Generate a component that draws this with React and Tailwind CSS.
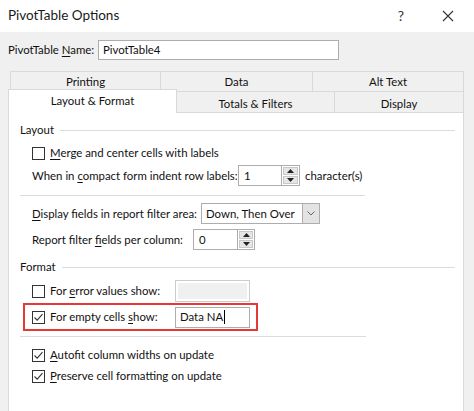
import React from 'react'

const inputBorder = 'border border-[#adadad]'

function Acc({ children }) {
  return <span className="underline underline-offset-[2px] decoration-[1px]">{children}</span>
}

function Check({ checked }) {
  return (
    <span className="flex h-[13px] w-[13px] shrink-0 items-center justify-center border border-[#333333] bg-white">
      {checked && (
        <svg width="11" height="11" viewBox="0 0 11 11">
          <path d="M1.5 5.5 L4.2 8.2 L9.5 2.2" fill="none" stroke="#333333" strokeWidth="1.1" />
        </svg>
      )}
    </span>
  )
}

function Spinner({ w = 'w-[18px]' }) {
  return (
    <div className={`flex h-full ${w} shrink-0 flex-col gap-px border border-l-0 border-[#adadad] bg-white p-px`}>
      <div className="flex flex-1 items-center justify-center border border-[#c8c8c8] bg-[#e6e6e6]">
        <svg width="7" height="4" viewBox="0 0 7 4"><path d="M0 4 L3.5 0 L7 4 Z" fill="#222" /></svg>
      </div>
      <div className="flex flex-1 items-center justify-center border border-[#c8c8c8] bg-[#e6e6e6]">
        <svg width="7" height="4" viewBox="0 0 7 4"><path d="M0 0 L3.5 4 L7 0 Z" fill="#222" /></svg>
      </div>
    </div>
  )
}

function GroupHeader({ label }) {
  return (
    <div className="flex h-[14px] items-center pl-[11px] pr-[8px]">
      <span>{label}</span>
      <div className="ml-[6px] h-px flex-1 bg-[#dcdcdc]" />
    </div>
  )
}

function Tab({ label, w, active, h = 'h-[20px]' }) {
  return (
    <div
      className={`flex ${w} ${h} shrink-0 items-center justify-center border border-b-0 border-[#d9d9d9] ${
        active ? 'relative z-10 bg-white' : 'bg-[#f0f0f0]'
      } -mr-px`}
    >
      {label}
    </div>
  )
}

export default function App() {
  return (
    <div className="flex h-[411px] w-[474px] flex-col overflow-hidden whitespace-nowrap bg-[#f0f0f0] font-['Segoe_UI','Lato',sans-serif] text-[11.4px] leading-none text-[#111]">
      {/* title bar */}
      <div className="flex h-[32px] shrink-0 items-center bg-white pl-[8px]">
        <span className="text-[13.5px] text-[#1a1a1a]">PivotTable Options</span>
        <span className="ml-auto text-[14px] text-[#333]">?</span>
        <svg className="ml-[38px] mr-[20px]" width="12" height="12" viewBox="0 0 12 12">
          <path d="M1 1 L11 11 M11 1 L1 11" stroke="#333" strokeWidth="1.1" />
        </svg>
      </div>

      {/* name */}
      <div className="mt-[8px] flex h-[20px] items-center pl-[8px]">
        <span className="w-[90px] shrink-0">
          PivotTable <Acc>N</Acc>ame:
        </span>
        <div className={`flex h-[20px] w-[241px] items-center bg-white pl-[4px] ${inputBorder}`}>PivotTable4</div>
      </div>

      {/* tabs */}
      <div className="mt-[11px] flex pl-[10px]">
        <Tab label="Printing" w="w-[151px]" />
        <Tab label="Data" w="w-[153px]" />
        <Tab label="Alt Text" w="w-[152px]" />
      </div>
      <div className="-mt-[2px] flex h-[24px] items-end pl-[8px]">
        <Tab label="Layout & Format" w="w-[169px]" h="h-[24px] pb-[2px]" active />
        <Tab label="Totals & Filters" w="w-[159px]" h="h-[22px] pt-[2px]" />
        <Tab label="Display" w="w-[130px]" h="h-[22px] pt-[2px]" />
      </div>

      {/* panel */}
      <div className="-mt-px ml-[8px] flex w-[456px] flex-1 flex-col border border-b-0 border-[#d9d9d9] bg-white pt-[10px]">
        <GroupHeader label="Layout" />

        <div className="mt-[6px] flex h-[20px] items-center pl-[23px]">
          <Check />
          <span className="ml-[5px]">
            <Acc>M</Acc>erge and center cells with labels
          </span>
        </div>

        <div className="mt-[2px] flex h-[21px] items-center pl-[23px]">
          <span className="w-[206px] shrink-0">
            When in <Acc>c</Acc>ompact form indent row labels:
          </span>
          <div className={`flex h-full w-[44px] shrink-0 items-center bg-white pl-[5px] ${inputBorder}`}>1</div>
          <Spinner />
          <span className="ml-[5px]">character(s)</span>
        </div>

        <div className="ml-[11px] mt-[9px] h-px w-[345px] bg-[#dcdcdc]" />

        <div className="mt-[7px] flex h-[21px] items-center pl-[23px]">
          <span className="w-[169px] shrink-0">
            <Acc>D</Acc>isplay fields in report filter area:
          </span>
          <div className={`flex h-full w-[119px] shrink-0 items-center bg-white ${inputBorder}`}>
            <span className="flex-1 pl-[4px]">Down, Then Over</span>
            <div className="flex h-full w-[17px] items-center justify-center border-l border-[#adadad] bg-[#e3e3e3]">
              <svg width="8" height="5" viewBox="0 0 8 5">
                <path d="M0.5 0.5 L4 4 L7.5 0.5" fill="none" stroke="#666" strokeWidth="1" />
              </svg>
            </div>
          </div>
        </div>

        <div className="mt-[5px] flex h-[21px] items-center pl-[23px]">
          <span className="w-[161px] shrink-0">
            Report filter <Acc>f</Acc>ields per column:
          </span>
          <div className={`flex h-full w-[45px] shrink-0 items-center bg-white pl-[5px] ${inputBorder}`}>0</div>
          <Spinner w="w-[17px]" />
        </div>

        <div className="mt-[10px]">
          <GroupHeader label="Format" />
        </div>

        <div className="mt-[6px] flex h-[22px] items-center pl-[23px]">
          <Check />
          <span className="ml-[5px] w-[125px] shrink-0">
            For <Acc>e</Acc>rror values show:
          </span>
          <div className="h-full w-[75px] shrink-0 border border-[#cccccc] bg-white p-[2px]">
            <div className="h-full w-full bg-[#f0f0f0]" />
          </div>
        </div>

        <div className="ml-[14px] mt-[1px] flex h-[28px] w-[235px] items-center border-2 border-[#e53935] pl-[7px]">
          <Check checked />
          <span className="ml-[5px] w-[125px] shrink-0">
            For empty cells <Acc>s</Acc>how:
          </span>
          <div className={`flex h-[21px] w-[75px] shrink-0 items-center bg-white pl-[4px] ${inputBorder}`}>
            Data NA<span className="ml-px h-[14px] w-px bg-black" />
          </div>
        </div>

        <div className="ml-[11px] mt-[5px] h-px w-[346px] bg-[#dcdcdc]" />

        <div className="mt-[8px] flex h-[20px] items-center pl-[23px]">
          <Check checked />
          <span className="ml-[5px]">
            <Acc>A</Acc>utofit column widths on update
          </span>
        </div>
        <div className="mt-px flex h-[20px] items-center pl-[23px]">
          <Check checked />
          <span className="ml-[5px]">
            <Acc>P</Acc>reserve cell formatting on update
          </span>
        </div>
      </div>
    </div>
  )
}
